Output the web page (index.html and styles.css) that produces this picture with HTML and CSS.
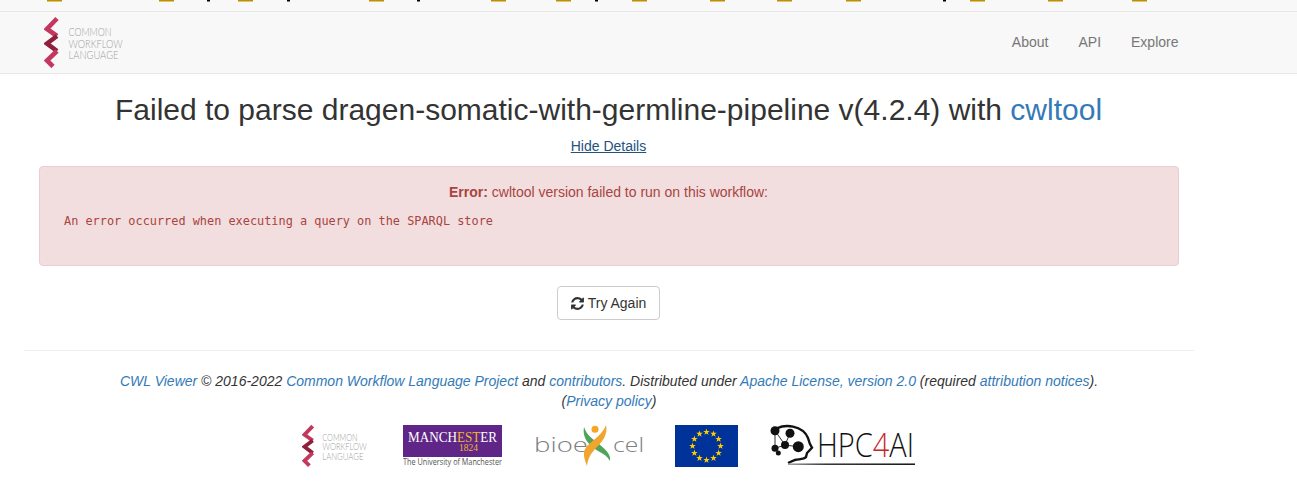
FILE: index.html
```html
<!DOCTYPE html>
<html lang="en">
<head>
<meta charset="utf-8">
<title>Failed to parse workflow</title>
<link rel="stylesheet" href="styles.css">
</head>
<body>
<svg class="strip" width="1297" height="11" viewBox="0 0 1297 11" aria-hidden="true">
  <g fill="#bd9000">
    <rect x="47" y="0" width="15" height="1.5"/><rect x="159" y="0" width="15" height="1.5"/>
    <rect x="238" y="0" width="15" height="1.5"/><rect x="369" y="0" width="15" height="1.5"/>
    <rect x="491" y="0" width="15" height="1.5"/><rect x="556" y="0" width="15" height="1.5"/>
    <rect x="632" y="0" width="15" height="1.5"/><rect x="710" y="0" width="15" height="1.5"/>
    <rect x="777" y="0" width="15" height="1.5"/><rect x="846" y="0" width="15" height="1.5"/>
    <rect x="970" y="0" width="15" height="1.5"/><rect x="1048" y="0" width="15" height="1.5"/>
    <rect x="1132" y="0" width="15" height="1.5"/>
  </g>
  <g fill="#000">
    <rect x="207" y="0" width="3" height="1.5"/><rect x="287" y="0" width="3" height="1.5"/>
    <rect x="417" y="0" width="3" height="1.5"/><rect x="595" y="0" width="3" height="1.5"/>
    <rect x="943" y="0" width="3" height="1.5"/>
  </g>
</svg>

<nav class="navbar">
  <div class="navbar-inner">
    <a class="brand" href="#">
      <svg class="cwl-logo" width="100" height="52" viewBox="0 0 100 52" role="img" aria-label="Common Workflow Language">
        <polyline class="zig-light" points="13,2.5 3,13 13,20"/>
        <polyline class="zig-dark" points="13,20 3,27.5 13,35"/>
        <polyline class="zig-light" points="13,35 3,44.5 9,50.5"/>
        <text class="cwl-text" x="24.5" y="20" textLength="43" lengthAdjust="spacingAndGlyphs">COMMON</text>
        <text class="cwl-text" x="24.5" y="31.5" textLength="54" lengthAdjust="spacingAndGlyphs">WORKFLOW</text>
        <text class="cwl-text" x="24.5" y="43" textLength="50" lengthAdjust="spacingAndGlyphs">LANGUAGE</text>
      </svg>
    </a>
    <ul class="nav">
      <li><a href="#">About</a></li>
      <li><a href="#">API</a></li>
      <li><a href="#">Explore</a></li>
    </ul>
  </div>
</nav>

<main class="container">
  <h2 class="title">Failed to parse dragen-somatic-with-germline-pipeline v(4.2.4) with <a href="#">cwltool</a></h2>
  <p class="details"><a href="#">Hide Details</a></p>
  <div class="alert">
    <p class="alert-head"><strong>Error:</strong> cwltool version failed to run on this workflow:</p>
    <pre class="alert-log">An error occurred when executing a query on the SPARQL store</pre>
  </div>
  <div class="actions">
    <a class="btn" href="#">
      <svg class="btn-icon" width="15" height="15" viewBox="0 0 1792 1792" aria-hidden="true"><path d="M1639 1056q0 5-1 7-64 268-268 434.5t-478 166.5q-146 0-282.5-55t-243.5-157l-129 129q-19 19-45 19t-45-19-19-45v-448q0-26 19-45t45-19h448q26 0 45 19t19 45-19 45l-137 137q71 66 161 102t187 36q134 0 250-65t186-179q11-17 53-117 8-23 30-23h192q13 0 22.5 9.5t9.5 22.5zm25-800v448q0 26-19 45t-45 19h-448q-26 0-45-19t-19-45 19-45l138-138q-148-137-349-137-134 0-250 65t-186 179q-11 17-53 117-8 23-30 23h-199q-13 0-22.5-9.5t-9.5-22.5v-7q65-268 270-434.5t480-166.5q146 0 284 55.5t245 156.5l130-129q19-19 45-19t45 19 19 45z"/></svg>
      Try Again
    </a>
  </div>
  <hr class="rule">
  <footer class="footer">
    <p class="credits"><a href="#">CWL Viewer</a> © 2016-2022 <a href="#">Common Workflow Language Project</a> and <a href="#">contributors</a>. Distributed under <a href="#">Apache License, version 2.0</a> (required <a href="#">attribution notices</a>).<br>(<a href="#">Privacy policy</a>)</p>
    <div class="logos">
      <svg class="cwl-logo" width="82.5" height="43" viewBox="0 0 100 52" role="img" aria-label="Common Workflow Language">
        <polyline class="zig-light" points="13,2.5 3,13 13,20"/>
        <polyline class="zig-dark" points="13,20 3,27.5 13,35"/>
        <polyline class="zig-light" points="13,35 3,44.5 9,50.5"/>
        <text class="cwl-text" x="24.5" y="20" textLength="43" lengthAdjust="spacingAndGlyphs">COMMON</text>
        <text class="cwl-text" x="24.5" y="31.5" textLength="54" lengthAdjust="spacingAndGlyphs">WORKFLOW</text>
        <text class="cwl-text" x="24.5" y="43" textLength="50" lengthAdjust="spacingAndGlyphs">LANGUAGE</text>
      </svg>
      <svg class="logo-man" width="99" height="43" viewBox="0 0 99 43" role="img" aria-label="The University of Manchester">
        <rect width="99" height="32" fill="#5f2587"/>
        <text class="man-word" x="5" y="17" textLength="89" lengthAdjust="spacingAndGlyphs">MANCH<tspan class="man-gold">EST</tspan>ER</text>
        <text class="man-year" x="56" y="26">1824</text>
        <text class="man-sub" x="0" y="39.5" textLength="99" lengthAdjust="spacingAndGlyphs">The University of Manchester</text>
      </svg>
      <svg class="logo-bio" width="109" height="43" viewBox="0 0 109 43" role="img" aria-label="BioExcel">
        <text class="bio-word" x="-1" y="28" textLength="54" lengthAdjust="spacingAndGlyphs">bioe</text>
        <text class="bio-word" x="78" y="28" textLength="31" lengthAdjust="spacingAndGlyphs">cel</text>
        <path d="M49 3 C52 12 58 15 64 20 C71 26 76 30 75 37 C72 31 66 29 60 25 C53 20 47 13 49 3Z" fill="#4fa35a"/>
        <path d="M71 1 C73 10 68 17 62 23 C56 29 53 34 52 42 C49 34 47 28 52 22 C59 15 68 10 71 1Z" fill="#f0a52e"/>
        <circle cx="60" cy="5.3" r="3.5" fill="#f5a623"/>
      </svg>
      <svg class="logo-eu" width="63" height="42" viewBox="0 0 63 42" role="img" aria-label="European Union flag">
        <defs><polygon id="star" points="0,-3.5 .8,-1.1 3.3,-1.1 1.3,.4 2.1,2.8 0,1.4 -2.1,2.8 -1.3,.4 -3.3,-1.1 -.8,-1.1"/></defs>
        <rect width="63" height="42" fill="#039"/>
        <g fill="#fc0">
          <use href="#star" x="31.5" y="7"/><use href="#star" x="38.5" y="8.9"/><use href="#star" x="43.6" y="14"/>
          <use href="#star" x="45.5" y="21"/><use href="#star" x="43.6" y="28"/><use href="#star" x="38.5" y="33.1"/>
          <use href="#star" x="31.5" y="35"/><use href="#star" x="24.5" y="33.1"/><use href="#star" x="19.4" y="28"/>
          <use href="#star" x="17.5" y="21"/><use href="#star" x="19.4" y="14"/><use href="#star" x="24.5" y="8.9"/>
        </g>
      </svg>
      <svg class="logo-hpc" width="146" height="43" viewBox="0 0 146 43" role="img" aria-label="HPC4AI">
        <defs><linearGradient id="fade" x1="0" x2="1" y1="0" y2="0"><stop offset="0" stop-color="#999"/><stop offset=".3" stop-color="#222"/><stop offset="1" stop-color="#000"/></linearGradient></defs>
        <path d="M6.7 4.3 C12 2 18 1.5 23 2.7 C31 4.5 36 9 38 14 C39 18 40 21 42 23.7 L37 29 L36 33 C34 35.5 29 35 25 36 L18 39" fill="none" stroke="#111" stroke-width="2.4"/>
        <path d="M5 6.7 L15 21 M20 9.3 L15 21 L28 22.7 M15 21 L5 24.3 M5 6.7 L5 24.3" fill="none" stroke="#333" stroke-width="1"/>
        <g fill="#111">
          <circle cx="5" cy="6.7" r="4.5"/><circle cx="20" cy="9.3" r="4.5"/><circle cx="15" cy="21" r="4"/>
          <circle cx="28.3" cy="22.7" r="5.5"/><circle cx="5" cy="24.3" r="3.5"/><circle cx="8.3" cy="29" r="2.5"/>
        </g>
        <text class="hpc-word" x="47" y="33" textLength="97" lengthAdjust="spacingAndGlyphs">HPC<tspan class="hpc-red">4</tspan>AI</text>
        <rect x="18" y="39.5" width="127" height="1.4" fill="url(#fade)"/>
      </svg>
    </div>
  </footer>
</main>
</body>
</html>
```
FILE: styles.css
```css
* { box-sizing: border-box; }

body {
  margin: 0;
  background: #fff;
  color: #333;
  font-family: "Liberation Sans", Arial, sans-serif;
  font-size: 14px;
  line-height: 20px;
}

a { color: #337ab7; text-decoration: none; }

.strip { display: block; background: #f8f8f8; }

.navbar {
  height: 63px;
  background: #f8f8f8;
  border-top: 1px solid #e7e7e7;
  border-bottom: 1px solid #e7e7e7;
}

.navbar-inner {
  width: 1170px;
  margin-left: 24px;
  padding: 4px 15.5px 0 20px;
  display: flex;
  justify-content: space-between;
}

.brand { display: block; height: 52px; }
.brand svg, .logos svg { display: block; }

.nav {
  list-style: none;
  margin: 16px 0 0;
  padding: 0;
  display: flex;
  gap: 30px;
}

.nav a { color: #777; }

.zig-light,
.zig-dark { fill: none; stroke-width: 4.6; stroke-linejoin: miter; }
.zig-light { stroke: #c43860; }
.zig-dark { stroke: #8f1f3a; }
.cwl-text { font-family: Lato, "Open Sans", sans-serif; font-size: 11px; font-weight: 300; fill: #a0a0a0; }

.container {
  width: 1170px;
  margin-left: 24px;
  padding: 0 15px;
}

.title {
  margin: 19px 0 10px;
  padding-right: 1px;
  font-size: 30px;
  font-weight: 500;
  line-height: 33px;
  text-align: center;
}

.details {
  margin: 0 0 10px;
  padding-right: 1px;
  text-align: center;
}

.details a { color: #23527c; text-decoration: underline; }

.alert {
  height: 100px;
  padding: 15px;
  background: #f2dede;
  border: 1px solid #ebccd1;
  border-radius: 4px;
  color: #a94442;
}

.alert-head { margin: 0; padding-right: 1px; text-align: center; }

.alert-log {
  margin: 0;
  padding: 9.5px 9px;
  font-family: "DejaVu Sans Mono", "Liberation Mono", monospace;
  font-size: 11.88px;
  line-height: 18px;
  color: #a94442;
}

.actions {
  margin-top: 20px;
  padding-right: 1px;
  display: flex;
  justify-content: center;
}

.btn {
  display: flex;
  align-items: center;
  gap: 3px;
  height: 34px;
  padding: 0 13px 0 12px;
  background: #fff;
  border: 1px solid #ccc;
  border-radius: 4px;
  color: #333;
}

.btn-icon { fill: #333; }

.rule {
  margin: 30px -15px 20px;
  border: 0;
  border-top: 1px solid #eee;
}

.footer { text-align: center; }

.credits {
  margin: 0;
  font-style: italic;
}

.logos {
  margin-top: 13px;
  padding-left: 263px;
  display: flex;
  justify-content: flex-start;
  align-items: flex-start;
}

.logo-man { margin: 1px 0 0 18.5px; }
.logo-bio { margin-left: 33px; }
.logo-eu { margin: 1px 0 0 31px; }
.logo-hpc { margin-left: 32px; }

.man-word { font-family: "Liberation Serif", serif; font-size: 15px; fill: #fff; }
.man-gold { fill: #efb92e; }
.man-year { font-family: "Liberation Serif", serif; font-size: 9.5px; fill: #efb92e; }
.man-sub { font-family: "Open Sans", sans-serif; font-size: 8.5px; fill: #555; }
.bio-word { font-family: "Open Sans", sans-serif; font-size: 21px; font-weight: 300; fill: #808080; }
.hpc-word { font-family: "Open Sans", sans-serif; font-size: 33px; font-weight: 300; fill: #111; }
.hpc-red { fill: #c8232c; }
```
